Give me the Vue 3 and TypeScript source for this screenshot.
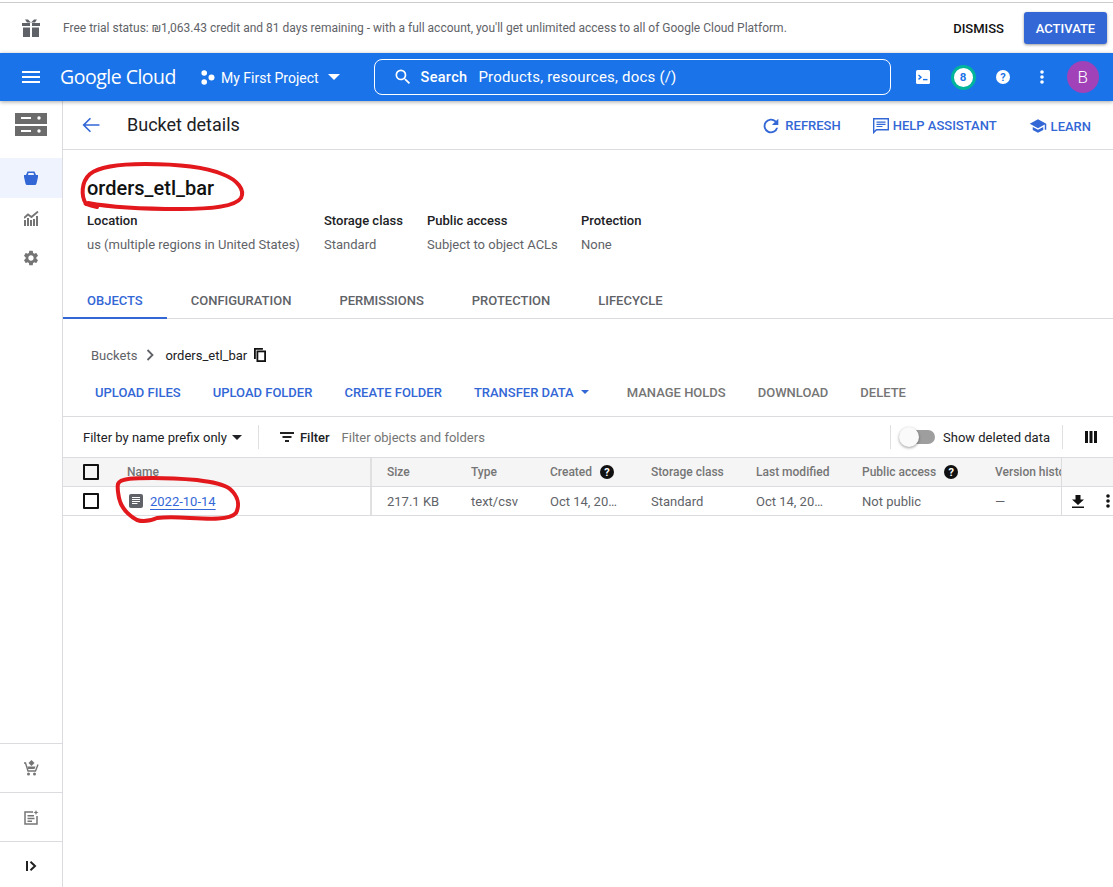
<script setup lang="ts">
const meta = [
  { label: 'Location', value: 'us (multiple regions in United States)', w: 237 },
  { label: 'Storage class', value: 'Standard', w: 103 },
  { label: 'Public access', value: 'Subject to object ACLs', w: 154 },
  { label: 'Protection', value: 'None', w: 100 },
]
const tabs = ['OBJECTS', 'CONFIGURATION', 'PERMISSIONS', 'PROTECTION', 'LIFECYCLE']
</script>

<template>
  <div class="page">
    <div class="trial">
      <svg class="gift" viewBox="0 0 18 18" width="18" height="18"><path fill="#5f6368" d="M0 4h8v3H0zM10 4h8v3h-8zM1 8.500h7V18H1zM10 8.500h7V18h-7zM3 .5h3l3 3H5zM15 .5h-3l-3 3h4z" /></svg>
      <span class="trial-text">Free trial status: ₪1,063.43 credit and 81 days remaining - with a full account, you'll get unlimited access to all of Google Cloud Platform.</span>
      <span class="dismiss">DISMISS</span>
      <span class="activate">ACTIVATE</span>
    </div>

    <header class="top">
      <svg class="burger" viewBox="0 0 18 12" width="18" height="12"><path fill="#fff" d="M0 0h18v2H0zM0 5h18v2H0zM0 10h18v2H0z" /></svg>
      <span class="logo">Google Cloud</span>
      <svg class="proj-icon" viewBox="0 0 14 15" width="14" height="15"><circle cx="3.200" cy="3" r="2.800" fill="#fff" /><circle cx="3.200" cy="12" r="2.800" fill="#fff" /><circle cx="10.500" cy="7.500" r="3" fill="#fff" /></svg>
      <span class="proj">My First Project</span>
      <span class="caret-white"></span>
      <div class="search">
        <svg viewBox="0 0 24 24" width="20" height="20"><path fill="#fff" d="M15.500 14h-.79l-.28-.27A6.470 6.470 0 0 0 16 9.500 6.500 6.500 0 1 0 9.500 16c1.610 0 3.090-.59 4.230-1.570l.27.28v.79l5 4.990L20.490 19l-4.990-5zm-6 0C7.010 14 5 11.990 5 9.500S7.010 5 9.500 5 14 7.010 14 9.500 11.990 14 9.500 14z" /></svg>
        <span class="search-b">Search</span>
        <span class="search-h">Products, resources, docs (/)</span>
      </div>
      <svg class="term" viewBox="0 0 14 14" width="14" height="14"><rect width="14" height="14" rx="1.500" fill="#fff" /><path d="M2.500 5l2.500 2.200-2.500 2.200" fill="none" stroke="#1a73e8" stroke-width="1.400" /><path d="M7 9.600h4.500" stroke="#1a73e8" stroke-width="1.400" /></svg>
      <span class="badge">8</span>
      <svg class="help" viewBox="0 0 14 14" width="14" height="14"><circle cx="7" cy="7" r="7" fill="#fff" /><text x="7" y="10.800" text-anchor="middle" class="help-q">?</text></svg>
      <svg class="dots" viewBox="0 0 4 14" width="4" height="14"><circle cx="2" cy="2" r="1.800" fill="#fff" /><circle cx="2" cy="7" r="1.800" fill="#fff" /><circle cx="2" cy="12" r="1.800" fill="#fff" /></svg>
      <span class="avatar">B</span>
    </header>

    <div class="body">
      <aside class="side">
        <div class="side-logo">
          <svg viewBox="0 0 32 23" width="32" height="23"><path fill="#6b6b6b" d="M0 0h32v11H0zM0 13h32v10H0z" /><path fill="#fff" d="M6 4h10v2H6zM6 17h10v2H6z" /><circle cx="24" cy="5" r="1.700" fill="#fff" /><circle cx="24" cy="18" r="1.700" fill="#fff" /></svg>
        </div>
        <div class="side-item active">
          <svg viewBox="0 0 14 14" width="14" height="14"><path fill="#3367d6" d="M3.500.5h7L12 4h2v2l-1.500 6.500q-.3 1.500-1.800 1.500H3.300q-1.500 0-1.800-1.500L0 6V4h2zM4.500 2L4 4h6l-.5-2z" /></svg>
        </div>
        <div class="side-item">
          <svg viewBox="0 0 15 15" width="15" height="15"><path fill="#757575" d="M0 9h2v6H0zM3 7h2v8H3zM6 9h2v6H6zM9 8h2v7H9zM12 5h2v10h-2z" /><path d="M0 7l4-3.500 3.500 2.500L14 .5" fill="none" stroke="#757575" stroke-width="1.800" /></svg>
        </div>
        <div class="side-item">
          <svg viewBox="0 0 24 24" width="18" height="18"><path fill="#757575" d="M19.140 12.940c.04-.3.06-.61.06-.94 0-.32-.02-.64-.07-.94l2.030-1.580a.49.49 0 0 0 .12-.61l-1.920-3.320a.488.488 0 0 0-.59-.22l-2.390.96c-.5-.38-1.030-.7-1.620-.94l-.36-2.540a.484.484 0 0 0-.48-.41h-3.840c-.24 0-.43.17-.47.41l-.36 2.540c-.59.24-1.130.57-1.620.94l-2.390-.96c-.22-.08-.47 0-.59.22L2.740 8.870c-.12.21-.08.47.12.61l2.030 1.580c-.05.3-.09.63-.09.94s.02.64.07.94l-2.030 1.580a.49.49 0 0 0-.12.61l1.920 3.320c.12.22.37.29.59.22l2.390-.96c.5.38 1.030.7 1.620.94l.36 2.540c.05.24.24.41.48.41h3.840c.24 0 .44-.17.47-.41l.36-2.540c.59-.24 1.130-.56 1.620-.94l2.390.96c.22.08.47 0 .59-.22l1.920-3.320c.12-.22.07-.47-.12-.61l-2.010-1.580zM12 15.600c-1.980 0-3.600-1.620-3.600-3.600s1.620-3.600 3.600-3.600 3.600 1.620 3.600 3.600-1.620 3.600-3.600 3.600z" /></svg>
        </div>
        <div class="side-spacer"></div>
        <div class="side-foot">
          <svg viewBox="0 0 15 16" width="15" height="16"><path fill="#757575" d="M7.500 0l3 3-3 3-3-3z" /><path d="M0 3h1.500l2.500 8h7.500L14 4.500" fill="none" stroke="#757575" stroke-width="1.400" /><path d="M3.500 6.500h8L10.500 9H4.200z" fill="#757575" /><circle cx="4.500" cy="14" r="1.500" fill="#757575" /><circle cx="10.500" cy="14" r="1.500" fill="#757575" /></svg>
        </div>
        <div class="side-foot">
          <svg viewBox="0 0 15 15" width="15" height="15"><path d="M9 2H1v12h12V6" fill="none" stroke="#757575" stroke-width="1.500" /><path fill="#757575" d="M3.500 5h6.500v1.400H3.500zM3.500 7.800h7v1.400h-7zM3.500 10.500h4.500v1.400H3.500zM12 0l.7 1.800 1.800.7-1.800.7-.7 1.800-.7-1.800-1.800-.7 1.800-.7z" /></svg>
        </div>
        <div class="side-foot last">
          <svg viewBox="0 0 11 10" width="11" height="10"><path fill="#222" d="M0 0h2v10H0z" /><path d="M4.500 .8L9 5 4.500 9.200" fill="none" stroke="#222" stroke-width="2" /></svg>
        </div>
      </aside>

      <main class="main">
        <div class="titlebar">
          <svg class="back" viewBox="0 0 16 14" width="18" height="16"><path d="M15.500 7H1.500M7.500 1L1.500 7l6 6" fill="none" stroke="#3367d6" stroke-width="1.500" /></svg>
          <h1 class="title">Bucket details</h1>
          <span class="spacer"></span>
          <span class="tlink refresh">
            <svg viewBox="0 0 24 24" width="22" height="22"><path fill="#3367d6" d="M17.650 6.350A8 8 0 1 0 19.730 14h-2.080a6 6 0 1 1-1.410-6.240L13 11h7V4z" /></svg>
            REFRESH
          </span>
          <span class="tlink assist">
            <svg viewBox="0 0 16 16" width="16" height="16"><path fill="none" stroke="#3367d6" stroke-width="1.400" d="M.7.700h14.600v11H3.500L.7 14.500z" /><path fill="#3367d6" d="M3.500 3.500h9v1.200h-9zM3.500 5.700h9v1.200h-9zM3.500 7.900h6v1.200h-6z" /></svg>
            HELP ASSISTANT
          </span>
          <span class="tlink learn">
            <svg viewBox="0 0 24 24" width="18" height="18"><path fill="#3367d6" d="M5 13.200v4L12 21l7-3.800v-4L12 17zM12 3L1 9l11 6 9-4.900V17h2V9z" /></svg>
            LEARN
          </span>
        </div>

        <section class="bucket">
          <div class="bucket-name">orders_etl_bar</div>
          <div class="meta">
            <div v-for="m in meta" :key="m.label" class="meta-col" :style="{ width: m.w + 'px' }">
              <div class="meta-l">{{ m.label }}</div>
              <div class="meta-v">{{ m.value }}</div>
            </div>
          </div>
        </section>

        <nav class="tabs">
          <span v-for="(t, i) in tabs" :key="t" class="tab" :class="{ on: i === 0 }">{{ t }}</span>
        </nav>

        <div class="crumbs">
          <span class="crumb-a">Buckets</span>
          <svg class="chev" viewBox="0 0 8 12" width="8" height="12"><path d="M1.500 1l5 5-5 5" fill="none" stroke="#5f6368" stroke-width="1.800" /></svg>
          <span class="crumb-b">orders_etl_bar</span>
          <svg class="copy" viewBox="0 0 12 14" width="12" height="14"><path d="M.9 11V.9h8" fill="none" stroke="#111" stroke-width="1.800" /><rect x="3.400" y="3.400" width="7.700" height="9.700" fill="none" stroke="#111" stroke-width="1.800" /></svg>
        </div>

        <div class="actions">
          <span class="act">UPLOAD FILES</span>
          <span class="act">UPLOAD FOLDER</span>
          <span class="act">CREATE FOLDER</span>
          <span class="act xfer">TRANSFER DATA<i class="caret-blue"></i></span>
          <span class="act off">MANAGE HOLDS</span>
          <span class="act off">DOWNLOAD</span>
          <span class="act off">DELETE</span>
        </div>

        <div class="filters">
          <span class="prefix">Filter by name prefix only</span>
          <i class="caret-dark"></i>
          <span class="vsep first"></span>
          <svg viewBox="0 0 14 10" width="14" height="10"><path fill="#222" d="M0 0h14v2H0zM2.500 4h9v2h-9zM5 8h4v2H5z" /></svg>
          <span class="filter-b">Filter</span>
          <span class="filter-h">Filter objects and folders</span>
          <span class="spacer"></span>
          <span class="vsep"></span>
          <span class="switch"><span class="knob"></span></span>
          <span class="deleted">Show deleted data</span>
          <span class="vsep end"></span>
          <svg class="columns" viewBox="0 0 12 12" width="12" height="12"><path fill="#111" d="M0 0h3v12H0zM4.500 0h3v12h-3zM9 0h3v12H9z" /></svg>
        </div>

        <div class="row head">
          <div class="cell c0"><span class="check"></span></div>
          <div class="cell c1 stick"><span class="hl">Name</span></div>
          <div class="cell pad"><span class="hl">Size</span></div>
          <div class="cell"><span class="hl">Type</span></div>
          <div class="cell"><span class="hl">Created</span><span class="qmark">?</span></div>
          <div class="cell"><span class="hl">Storage class</span></div>
          <div class="cell"><span class="hl">Last modified</span></div>
          <div class="cell"><span class="hl">Public access</span><span class="qmark">?</span></div>
          <div class="cell clip"><span class="hl">Version history</span></div>
          <div class="cell rowact"></div>
        </div>
        <div class="row data">
          <div class="cell c0"><span class="check"></span></div>
          <div class="cell c1 stick">
            <svg class="fileicon" viewBox="0 0 14 14" width="14" height="14"><rect width="14" height="14" rx="2" fill="#5f6368" /><path fill="#fff" d="M3 3h8v1H3zM3 5h8v1H3zM3 7h8v1H3zM3 9h5.500v1H3z" /></svg>
            <a class="file">2022-10-14</a>
          </div>
          <div class="cell pad">217.1 KB</div>
          <div class="cell">text/csv</div>
          <div class="cell">Oct 14, 20…</div>
          <div class="cell">Standard</div>
          <div class="cell">Oct 14, 20…</div>
          <div class="cell">Not public</div>
          <div class="cell">—</div>
          <div class="cell rowact">
            <svg viewBox="0 0 12 13" width="12" height="13"><path fill="#111" d="M3.500 0h5v4.500H12L6 10 0 4.500h3.500zM0 11.500h12V13H0z" /></svg>
            <svg class="rowdots" viewBox="0 0 4 14" width="4" height="14"><circle cx="2" cy="2" r="1.800" fill="#111" /><circle cx="2" cy="7" r="1.800" fill="#111" /><circle cx="2" cy="12" r="1.800" fill="#111" /></svg>
          </div>
        </div>
      </main>
    </div>

    <svg class="scribble" viewBox="0 0 1113 887" width="1113" height="887">
      <path d="M97 207C88 205 84 203 86 204C81 196 81 182 90 174C100 166 120 164 145 164C175 164 205 167 222 174C238 180 245 190 241 198C235 207 210 209 180 209C150 209 115 208 88 203" />
      <path d="M118 484C120 478 135 478 153 478C170 478 185 479 197 480C212 482 224 484 230 489C238 496 240 505 236 513C230 520 210 519 190 518C175 517 165 517 157 518C150 521 143 522 137 520C128 515 121 507 119 498C118 492 117 488 118 484" />
    </svg>
  </div>
</template>

<style>
html, body { margin: 0; padding: 0; background: #fff; }
</style>

<style scoped>
.page { position: relative; width: 1113px; height: 887px; overflow: hidden; display: flex; flex-direction: column; font-family: Roboto, "Noto Sans", sans-serif; color: #202124; background: #fff; }
.spacer { flex: 1; }
.trial { margin-top: 2px; border-top: 1px solid #ccc; height: 51px; flex: none; display: flex; align-items: center; padding: 0 6px 0 22px; box-sizing: border-box; }
.gift { flex: none; }
.trial-text { margin-left: 23px; flex: 1; font-size: 12px; color: #5f6368; white-space: nowrap; }
.dismiss { font-size: 13px; font-weight: 500; color: #111; margin-right: 20px; }
.activate { width: 83px; height: 32px; background: #3367d6; color: #fff; border-radius: 3px; font-size: 13px; font-weight: 500; display: flex; align-items: center; justify-content: center; box-shadow: 0 1px 3px rgba(0,0,0,.4); }

.top { flex: none; height: 48px; background: #1a73e8; display: flex; align-items: center; padding: 0 14px 0 22px; box-sizing: border-box; color: #fff; box-shadow: 0 1px 4px rgba(0,0,0,.35); position: relative; z-index: 2; }
.logo { margin-left: 20px; padding-bottom: 2px; font-size: 19.500px; letter-spacing: -.5px; font-family: "Open Sans", Roboto, sans-serif; white-space: nowrap; width: 120px; }
.proj-icon { margin-left: 21px; }
.proj { margin-left: 6px; padding-top: 2px; font-size: 14px; white-space: nowrap; }
.caret-white { margin-left: 9px; border: 6px solid transparent; border-top: 6px solid #fff; border-bottom: 0; }
.search { margin-left: 34px; width: 517px; height: 36px; box-sizing: border-box; border: 1px solid #fff; border-radius: 8px; display: flex; align-items: center; padding-left: 18px; font-size: 15px; letter-spacing: .2px; }
.search-b { margin-left: 8px; font-weight: 500; font-size: 14.500px; letter-spacing: .3px; }
.search-h { margin-left: 11px; }
.term { margin-left: 25px; }
.badge { margin-left: 21px; width: 19px; height: 19px; box-sizing: content-box; border: 3.500px solid #00b49c; border-radius: 50%; background: #fff; color: #1a73e8; font-size: 11.500px; font-weight: 700; display: flex; align-items: center; justify-content: center; }
.help { margin-left: 20px; }
.help-q { font: 700 11px Roboto, sans-serif; fill: #1a73e8; }
.dots { margin-left: 30px; }
.avatar { margin-left: 23px; width: 32px; height: 32px; border-radius: 50%; background: #a142b8; display: flex; align-items: center; justify-content: center; font-size: 17px; font-weight: 300; }

.body { flex: 1; display: flex; min-height: 0; }
.side { width: 63px; flex: none; box-sizing: border-box; border-right: 1px solid #dadce0; display: flex; flex-direction: column; }
.side-logo { height: 47px; padding-bottom: 2px; display: flex; align-items: center; justify-content: center; margin-bottom: 8px; }
.side-item { height: 40px; display: flex; align-items: center; justify-content: center; }
.side-item.active { background: #eef3fd; }
.side-spacer { flex: 1; }
.side-foot { height: 48px; flex: none; border-top: 1px solid #dadce0; display: flex; align-items: center; justify-content: center; }
.side-foot.last { height: 43px; padding-top: 2px; }

.main { flex: 1; min-width: 0; display: flex; flex-direction: column; }
.titlebar { height: 49px; flex: none; box-sizing: border-box; border-bottom: 1px solid #dadce0; display: flex; align-items: center; padding: 0 22px 1px 19px; }
.title { margin: 0 0 0 27px; font-size: 18px; font-weight: 400; color: #202124; }
.tlink { display: flex; align-items: center; gap: 5px; font-size: 13px; font-weight: 500; color: #3367d6; padding-top: 2px; }
.refresh { gap: 3px; }
.assist { margin-left: 32px; gap: 4px; }
.learn { margin-left: 32px; gap: 4px; padding-top: 3px; }

.bucket { flex: none; padding: 25px 0 0 24px; height: 137px; box-sizing: border-box; }
.bucket-name { font-size: 20px; line-height: 26px; color: #111; font-weight: 500; }
.meta { display: flex; margin-top: 11px; }
.meta-l { font-size: 13px; font-weight: 500; line-height: 18px; color: #202124; }
.meta-v { font-size: 13px; line-height: 18px; margin-top: 6px; color: #5f6368; white-space: nowrap; }

.tabs { flex: none; height: 32px; box-sizing: border-box; border-bottom: 1px solid #dadce0; display: flex; }
.tab { padding: 0 24px 4px; font-size: 13px; font-weight: 500; color: #5f6368; display: flex; align-items: center; height: 32px; box-sizing: border-box; border-bottom: 2px solid transparent; }
.tab.on { color: #3367d6; border-bottom-color: #3367d6; }

.crumbs { flex: none; height: 24px; margin-top: 24px; padding-left: 28px; display: flex; align-items: center; font-size: 13px; }
.crumb-a { color: #5f6368; }
.chev { margin-left: 9px; }
.crumb-b { margin-left: 11px; color: #202124; }
.copy { margin-left: 7px; }

.actions { flex: none; height: 49px; margin-top: 1px; box-sizing: border-box; border-bottom: 1px solid #dadce0; padding: 0 0 0 32px; display: flex; align-items: center; font-size: 13px; font-weight: 500; color: #3367d6; }
.act { margin-right: 32px; white-space: nowrap; display: flex; align-items: center; }
.act.off { color: #757575; }
.act.xfer { margin-right: 38px; }
.caret-blue { margin-left: 7px; border: 4.500px solid transparent; border-top: 4.500px solid #3367d6; border-bottom: 0; }

.filters { flex: none; height: 40px; box-sizing: border-box; display: flex; align-items: center; padding-left: 20px; font-size: 13px; }
.prefix { color: #202124; white-space: nowrap; }
.caret-dark { margin-left: 5px; border: 5.500px solid transparent; border-top: 5.500px solid #202124; border-bottom: 0; }
.vsep { width: 1px; height: 24px; background: #e0e0e0; margin: 0; }
.vsep.first { margin: 0 21px 0 16px; }
.filter-b { margin-left: 6px; font-weight: 500; }
.filter-h { margin-left: 12px; color: #757575; }
.switch { margin-left: 8px; width: 36px; height: 14px; position: relative; display: block; }
.switch::before { content: ""; position: absolute; left: 10px; top: 0; width: 26px; height: 14px; border-radius: 7px; background: #9e9e9e; }
.knob { position: absolute; left: 0; top: -3px; width: 20px; height: 20px; border-radius: 50%; background: #fafafa; box-shadow: 0 1px 3px rgba(0,0,0,.4); }
.deleted { margin-left: 8px; white-space: nowrap; color: #202124; }
.vsep.end { margin-left: 12px; }
.columns { margin: 0 16px 0 22px; }

.row { flex: none; display: grid; grid-template-columns: 64px 245px 99px 79px 101px 105px 106px 133px 66px 52px; box-sizing: border-box; border-top: 1px solid #dadce0; font-size: 13px; color: #5f6368; }
.row.head { height: 29px; background: #f5f5f5; font-size: 12px; color: #757575; }
.hl { font-weight: 500; }
.row.data { height: 30px; border-bottom: 1px solid #dadce0; }
.cell { display: flex; align-items: center; white-space: nowrap; min-width: 0; }
.c0 { padding-left: 20px; }
.check { width: 12px; height: 12px; border: 2px solid #111; border-radius: 1px; display: block; }
.stick { border-right: 2px solid #e0e0e0; box-sizing: border-box; }
.pad { padding-left: 15px; }
.qmark { width: 14px; height: 14px; margin-left: 8px; border-radius: 50%; background: #111; color: #fff; font-size: 11px; font-weight: 700; display: inline-flex; align-items: center; justify-content: center; }
.clip { overflow: hidden; }
.rowact { border-left: 1px solid #dadce0; box-sizing: border-box; padding-left: 10px; }
.rowdots { margin-left: 22px; flex: none; }
.fileicon { margin-left: 2px; flex: none; }
.file { margin-left: 7px; color: #3367d6; text-decoration: underline; text-underline-offset: 3px; }

.scribble { position: absolute; left: 0; top: 0; pointer-events: none; z-index: 3; }
.scribble path { fill: none; stroke: #e2181c; stroke-width: 4; stroke-linecap: round; stroke-linejoin: round; }
</style>
